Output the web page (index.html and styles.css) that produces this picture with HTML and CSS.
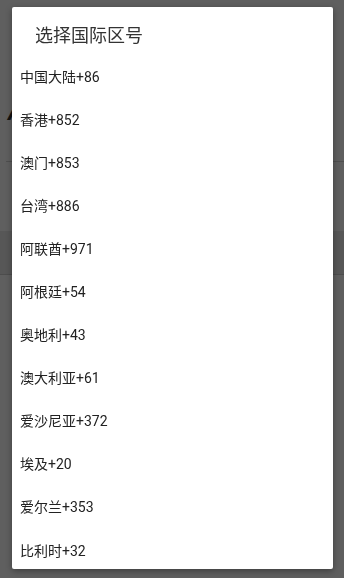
FILE: index.html
```html
<!DOCTYPE html>
<html lang="zh">
<head>
<meta charset="utf-8">
<link rel="stylesheet" href="styles.css">
</head>
<body>
<div class="page">
  <div class="page-head"><span class="page-letter">A</span></div>
  <div class="page-divider"></div>
  <div class="page-band"></div>
</div>
<div class="dialog">
  <div class="dialog-title">选择国际区号</div>
  <ul class="code-list">
    <li class="code-item">中国大陆+86</li>
    <li class="code-item">香港+852</li>
    <li class="code-item">澳门+853</li>
    <li class="code-item">台湾+886</li>
    <li class="code-item">阿联酋+971</li>
    <li class="code-item">阿根廷+54</li>
    <li class="code-item">奥地利+43</li>
    <li class="code-item">澳大利亚+61</li>
    <li class="code-item">爱沙尼亚+372</li>
    <li class="code-item">埃及+20</li>
    <li class="code-item">爱尔兰+353</li>
    <li class="code-item">比利时+32</li>
  </ul>
</div>
</body>
</html>
```
FILE: styles.css
```css
html, body {
  margin: 0;
  padding: 0;
}
body {
  width: 344px;
  height: 578px;
  overflow: hidden;
  background: #5f5f5f;
  font-family: Roboto, "Noto Sans CJK SC", sans-serif;
}
.page {
  display: flex;
  flex-direction: column;
}
.page-head {
  box-sizing: border-box;
  height: 161px;
  padding-top: 101px;
  padding-left: 8px;
}
.page-letter {
  font-size: 22px;
  line-height: 24px;
  font-weight: bold;
  font-style: italic;
  color: #111;
}
.page-divider {
  height: 1px;
  margin-left: 6px;
  background: #4f4f4f;
}
.page-band {
  margin-top: 69px;
  height: 43px;
  background: #575757;
  border-bottom: 1px solid #4d4d4d;
}
.dialog {
  position: fixed;
  left: 12px;
  top: 7px;
  width: 321px;
  height: 562px;
  background: #fff;
  border-radius: 2px;
  box-shadow: 0 2px 6px rgba(0, 0, 0, 0.35);
  overflow: hidden;
}
.dialog-title {
  margin-top: 17px;
  padding-left: 23px;
  font-size: 18px;
  line-height: 24px;
  color: #333;
}
.code-list {
  list-style: none;
  margin: 7.5px 0 0;
  padding: 0;
}
.code-item {
  height: 43.1px;
  line-height: 43.1px;
  padding-left: 8px;
  font-size: 14px;
  color: #222;
}
```
